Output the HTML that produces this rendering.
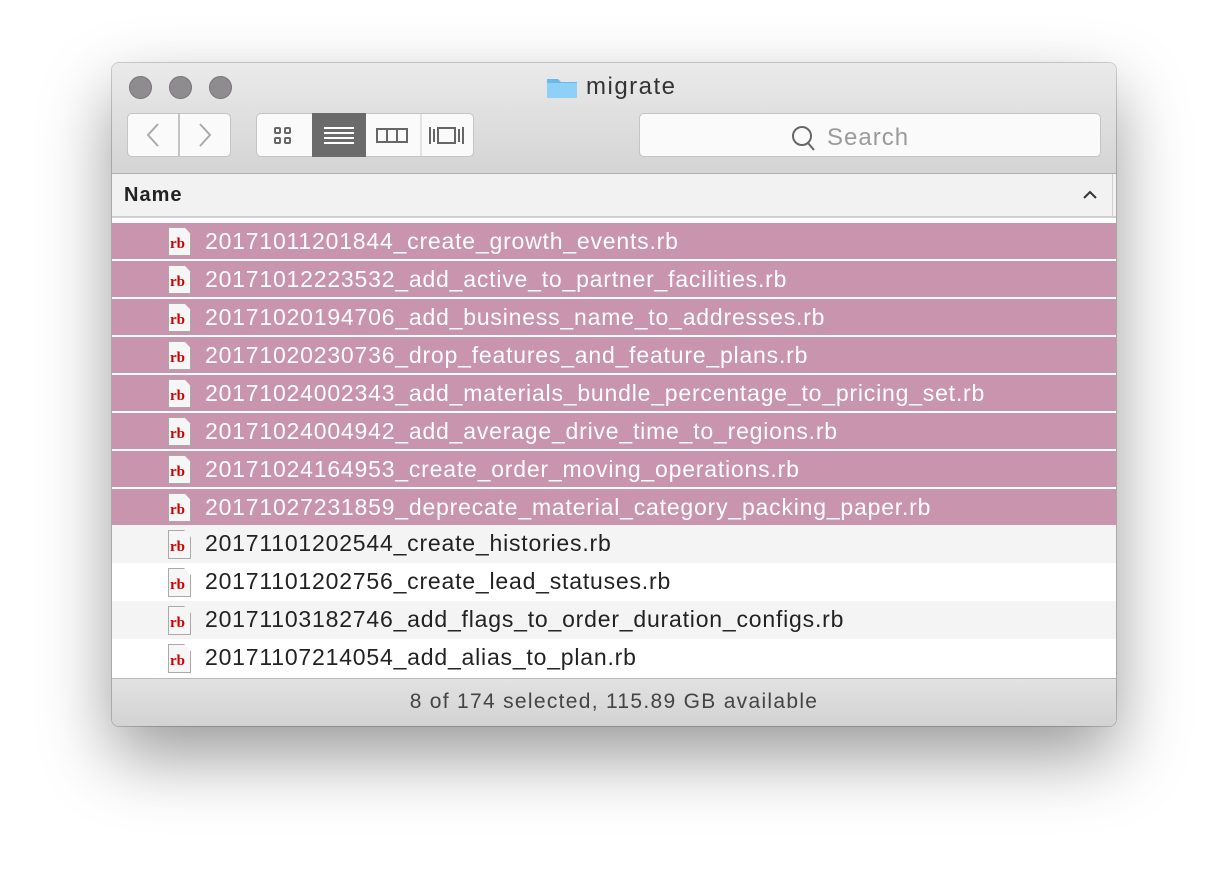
<!DOCTYPE html>
<html><head><style>
body{margin:0;width:1228px;height:886px;background:#fff;font-family:"Liberation Sans",sans-serif;position:relative;overflow:hidden}
.win{position:absolute;left:112px;top:63px;width:1004px;height:663px;border-radius:7px;overflow:hidden;box-shadow:0 30px 70px rgba(0,0,0,0.4),0 0 0 1px rgba(0,0,0,0.18);background:#fff}
.tb{position:absolute;left:0;top:0;width:100%;height:110px;background:linear-gradient(#ebeaeb,#d5d4d5);border-bottom:1px solid #b0b0b0}
.dot{position:absolute;top:13px;width:23px;height:23px;border-radius:50%;background:#8e8c8e;box-shadow:inset 0 0 0 1px #7c7a7c}
.title{position:absolute;top:10px;font-size:24px;color:#333;letter-spacing:1.5px}
.btn{position:absolute;top:50px;height:44px;background:#fafafa;border:1px solid #c4c4c4;border-radius:5px;box-sizing:border-box}
.hdr{position:absolute;top:111px;left:0;width:1004px;height:44px;background:#f2f2f2;border-bottom:2px solid #cfcfcf;box-sizing:border-box}
.row{position:absolute;left:0;width:1004px;height:36px;font-size:23px;line-height:36px;color:#222;letter-spacing:0.8px}
.row span{position:absolute;left:93px}
.sel{background:#c994ae;color:#fff}
.icon{position:absolute;left:56px;top:4px;width:23px;height:29px;background:#f6f6f6;border:1px solid #a9a9a9;box-sizing:border-box;clip-path:polygon(0 0,70% 0,100% 25%,100% 100%,0 100%)}
.icon b{position:absolute;left:1px;top:9px;font:bold 15px "Liberation Serif",serif;color:#cc0000;line-height:15px;letter-spacing:0}
.status{position:absolute;top:615px;left:0;width:100%;height:48px;background:linear-gradient(#e3e2e3,#d3d2d3);border-top:1px solid #b8b8b8;text-align:center;font-size:21px;line-height:46px;color:#444;letter-spacing:1.3px}
</style></head><body>
<div class="win">
<div class="tb">
<div class="dot" style="left:17px"></div><div class="dot" style="left:57px"></div><div class="dot" style="left:97px"></div>
<svg style="position:absolute;left:434px;top:12px" width="32" height="24"><path d="M1 4h11l3 3h16v16H1z" fill="#6ab9ec"/><path d="M1 8h30v15H1z" fill="#8fd0f8"/></svg>
<div class="title" style="left:474px">migrate</div>
<div class="btn" style="left:15px;width:52px;border-radius:5px 0 0 5px"><svg width="50" height="42"><path d="M30 10L20 21l10 11" stroke="#aaa" stroke-width="2" fill="none"/></svg></div>
<div class="btn" style="left:67px;width:52px;border-radius:0 5px 5px 0"><svg width="50" height="42"><path d="M20 10l10 11-10 11" stroke="#aaa" stroke-width="2" fill="none"/></svg></div>
<div class="btn" style="left:144px;width:218px"></div>
<svg style="position:absolute;left:144px;top:50px" width="218" height="44">
<g fill="none" stroke="#666" stroke-width="2"><rect x="19" y="15" width="5" height="5" rx="1"/><rect x="29" y="15" width="5" height="5" rx="1"/><rect x="19" y="25" width="5" height="5" rx="1"/><rect x="29" y="25" width="5" height="5" rx="1"/></g>
<rect x="56" y="0" width="54" height="44" fill="#6b6b6b"/>
<g stroke="#fff" stroke-width="2"><path d="M68 15h30M68 20h30M68 25h30M68 30h30"/></g>
<line x1="165" y1="1" x2="165" y2="43" stroke="#ccc"/>
<g fill="none" stroke="#666" stroke-width="2"><rect x="121" y="16" width="30" height="13"/><path d="M131 16v13M141 16v13"/>
<rect x="182" y="15" width="17" height="15"/><path d="M174 14v17M178 16v13M203 16v13M207 14v17"/></g>
</svg>
<div class="btn" style="left:527px;width:462px;background:#fafafa"></div>
<svg style="position:absolute;left:678px;top:61px" width="28" height="28"><circle cx="12" cy="12" r="9" fill="none" stroke="#666" stroke-width="2"/><path d="M18 19l6 7" stroke="#666" stroke-width="2"/></svg>
<div style="position:absolute;left:715px;top:61px;font-size:24px;color:#9a9a9a;letter-spacing:1px">Search</div>
</div>
<div class="hdr"><div style="position:absolute;left:12px;top:10px;font-size:20px;color:#222;font-weight:bold;letter-spacing:1px">Name</div>
<svg style="position:absolute;left:971px;top:16px" width="14" height="10"><path d="M1 8l6-6 6 6" stroke="#333" stroke-width="2" fill="none"/></svg>
<div style="position:absolute;left:1000px;top:0;width:1px;height:42px;background:#d0d0d0"></div></div>

<div class="row sel" style="top:160px"><div class="icon"><b>rb</b></div><span>20171011201844_create_growth_events.rb</span></div>
<div class="row sel" style="top:198px"><div class="icon"><b>rb</b></div><span>20171012223532_add_active_to_partner_facilities.rb</span></div>
<div class="row sel" style="top:236px"><div class="icon"><b>rb</b></div><span>20171020194706_add_business_name_to_addresses.rb</span></div>
<div class="row sel" style="top:274px"><div class="icon"><b>rb</b></div><span>20171020230736_drop_features_and_feature_plans.rb</span></div>
<div class="row sel" style="top:312px"><div class="icon"><b>rb</b></div><span>20171024002343_add_materials_bundle_percentage_to_pricing_set.rb</span></div>
<div class="row sel" style="top:350px"><div class="icon"><b>rb</b></div><span>20171024004942_add_average_drive_time_to_regions.rb</span></div>
<div class="row sel" style="top:388px"><div class="icon"><b>rb</b></div><span>20171024164953_create_order_moving_operations.rb</span></div>
<div class="row sel" style="top:426px"><div class="icon"><b>rb</b></div><span>20171027231859_deprecate_material_category_packing_paper.rb</span></div>
<div class="row" style="top:462px;height:38px;background:#f4f4f4"><div class="icon" style="top:5px"><b>rb</b></div><span>20171101202544_create_histories.rb</span></div>
<div class="row" style="top:500px;height:38px;background:#fff"><div class="icon" style="top:5px"><b>rb</b></div><span>20171101202756_create_lead_statuses.rb</span></div>
<div class="row" style="top:538px;height:38px;background:#f4f4f4"><div class="icon" style="top:5px"><b>rb</b></div><span>20171103182746_add_flags_to_order_duration_configs.rb</span></div>
<div class="row" style="top:576px;height:38px;background:#fff"><div class="icon" style="top:5px"><b>rb</b></div><span>20171107214054_add_alias_to_plan.rb</span></div>
<div class="status">8 of 174 selected, 115.89 GB available</div>
</div>
</body></html>
